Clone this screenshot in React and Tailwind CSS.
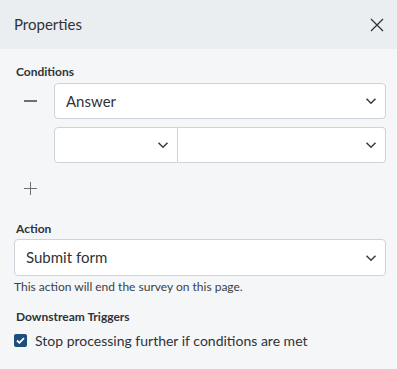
const Chevron = () => (
  <svg width="12" height="8" viewBox="0 0 12 8" className="shrink-0 text-[#3a3f45]">
    <path d="M1.5 1.8 6 6.2l4.5-4.4" fill="none" stroke="currentColor" strokeWidth="1.6" />
  </svg>
);

const CloseIcon = () => (
  <svg width="14" height="14" viewBox="0 0 14 14" className="text-[#2f3337]">
    <path d="M1 1l12 12M13 1 1 13" fill="none" stroke="currentColor" strokeWidth="1.3" />
  </svg>
);

function Select({ value, className = '' }) {
  return (
    <div className={`flex items-center justify-between bg-white border border-[#cdd3da] h-[36px] pl-[11px] pr-[8px] ${className}`}>
      <span className="text-[15px] text-[#2f3337]">{value}</span>
      <Chevron />
    </div>
  );
}

export default function App() {
  return (
    <div className="w-[397px] h-[369px] bg-[#f5f6f8] font-['Lato',sans-serif] text-[#2f3337]">
      {/* Header */}
      <div className="h-[49px] bg-[#ebeef1] flex items-center justify-between pl-[14px] pr-[13px]">
        <span className="text-[15px] text-[#2f3337]">Properties</span>
        <CloseIcon />
      </div>

      <div className="pl-[14px] pr-[11px] pt-[15px]">
        <div className="text-[12px] font-bold pl-[2px] leading-[15px]">Conditions</div>

        <div className="flex items-center mt-[4px]">
          <div className="w-[40px] flex justify-center pr-[8px]">
            <div className="w-[13px] h-[2px] bg-[#6b7076]" />
          </div>
          <Select value="Answer" className="flex-1 rounded-[4px]" />
        </div>

        <div className="flex mt-[8px] ml-[40px]">
          <Select value="" className="w-[124px] rounded-l-[4px]" />
          <Select value="" className="flex-1 rounded-r-[4px] border-l-0" />
        </div>

        <div className="w-[40px] flex justify-center pr-[8px] mt-[19px] h-[13px] relative">
          <div className="relative w-[13px] h-[13px]">
            <div className="absolute left-0 top-[6px] w-[13px] h-[1px] bg-[#6b7076]" />
            <div className="absolute top-0 left-[6px] w-[1px] h-[13px] bg-[#6b7076]" />
          </div>
        </div>

        <div className="text-[12px] font-bold mt-[26px] pl-[2px] leading-[15px]">Action</div>
        <Select value="Submit form" className="rounded-[4px] mt-[3px] h-[37px]" />
        <div className="text-[12px] text-[#3a3f45] mt-[3px] leading-[15px]">This action will end the survey on this page.</div>

        <div className="text-[12px] font-bold mt-[15px] pl-[2px] leading-[15px]">Downstream Triggers</div>
        <div className="flex items-center mt-[6px] gap-[8px]">
          <div className="w-[13px] h-[13px] rounded-[2px] bg-[#1d4f7e] flex items-center justify-center">
            <svg width="9" height="7" viewBox="0 0 9 7">
              <path d="M1 3.5 3.4 5.8 8 1.2" fill="none" stroke="white" strokeWidth="1.8" />
            </svg>
          </div>
          <span className="text-[14px] text-[#2f3337]">Stop processing further if conditions are met</span>
        </div>
      </div>
    </div>
  );
}
